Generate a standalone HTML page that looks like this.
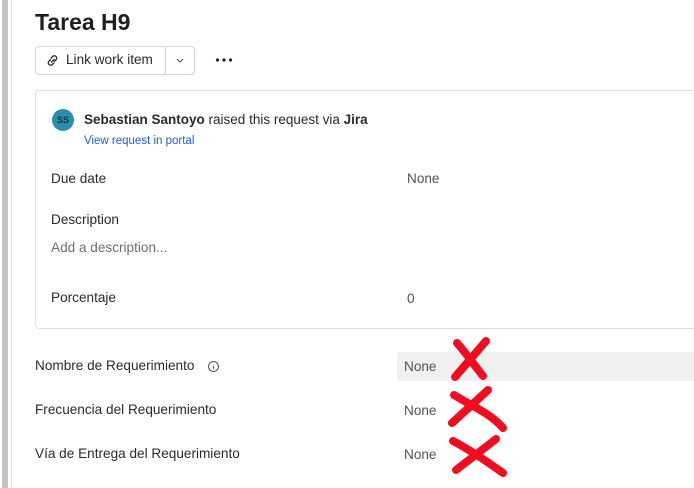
<!DOCTYPE html>
<html><head><meta charset="utf-8"><style>
*{margin:0;padding:0;box-sizing:border-box}
body{width:694px;height:488px;overflow:hidden;background:#fff;font-family:"Liberation Sans",sans-serif;color:#292a2e;position:relative}
.a{position:absolute;white-space:nowrap}
.lbl{font-size:13.6px;color:#292a2e}
.val{font-size:13.6px;color:#505258}
</style></head><body>
<div class="a" style="left:2px;top:0;width:6px;height:488px;background:#c4c4c4"></div>
<div class="a" style="left:11px;top:0;width:1px;height:488px;background:#e2e2e2"></div>

<div class="a" style="left:35px;top:9px;font-size:23px;font-weight:bold;color:#1f1f21">Tarea H9</div>

<div class="a" style="left:35px;top:46px;width:160px;height:29px;border:1px solid #d5d6d9;border-radius:4px"></div>
<div class="a" style="left:165px;top:47px;width:1px;height:27px;background:#d5d6d9"></div>
<svg class="a" style="left:45px;top:53px" width="15" height="15" viewBox="0 0 14 14" fill="none" stroke="#333" stroke-width="1.3" stroke-linecap="round"><path d="M6 8.5l2.5-2.5"/><path d="M5.2 6.2L3.6 7.8a2.2 2.2 0 003.1 3.1l1.6-1.6"/><path d="M8.8 7.8l1.6-1.6a2.2 2.2 0 00-3.1-3.1L5.7 4.7"/></svg>
<div class="a" style="left:66px;top:52px;font-size:13.6px;color:#292a2e">Link work item</div>
<svg class="a" style="left:175px;top:57px" width="10" height="7" viewBox="0 0 10 7" fill="none" stroke="#555" stroke-width="1.1"><path d="M2 2l3 3 3-3"/></svg>
<svg class="a" style="left:215px;top:58px" width="18" height="4"><circle cx="2.5" cy="2" r="1.6" fill="#222"/><circle cx="9" cy="2" r="1.6" fill="#222"/><circle cx="15.5" cy="2" r="1.6" fill="#222"/></svg>

<div class="a" style="left:35px;top:90px;width:700px;height:239px;border:1px solid #dfe0e2;border-radius:4px"></div>

<div class="a" style="left:52px;top:109px;width:22px;height:22px;border-radius:50%;background:#2b8dae;color:#16344a;font-size:9px;font-weight:bold;text-align:center;line-height:22px">SS</div>
<div class="a" style="left:84px;top:112px;font-size:13.5px"><b>Sebastian Santoyo</b> raised this request via <b>Jira</b></div>
<div class="a" style="left:84px;top:135px;font-size:11.5px;color:#1d5fd6">View request in portal</div>

<div class="a lbl" style="left:51px;top:171px">Due date</div>
<div class="a val" style="left:407px;top:171px">None</div>
<div class="a lbl" style="left:51px;top:212px">Description</div>
<div class="a val" style="left:51px;top:240px;color:#6b6e76">Add a description...</div>
<div class="a lbl" style="left:51px;top:290px">Porcentaje</div>
<div class="a val" style="left:407px;top:291px">0</div>

<div class="a" style="left:397px;top:352px;width:297px;height:29px;background:#f0f0f1;border-radius:3px 0 0 3px"></div>
<div class="a lbl" style="left:35px;top:358px">Nombre de Requerimiento</div>
<svg class="a" style="left:207px;top:360px" width="13" height="13" viewBox="0 0 13 13" fill="none" stroke="#555" stroke-width="1"><circle cx="6.5" cy="6.5" r="5"/><path d="M6.5 6v3.2M6.5 4v.4"/></svg>
<div class="a val" style="left:404px;top:359px">None</div>
<div class="a lbl" style="left:35px;top:402px">Frecuencia del Requerimiento</div>
<div class="a val" style="left:404px;top:403px">None</div>
<div class="a lbl" style="left:35px;top:446px">Vía de Entrega del Requerimiento</div>
<div class="a val" style="left:404px;top:447px">None</div>

<svg class="a" style="left:0;top:0" width="694" height="488" fill="none" stroke="#f20d1e" stroke-width="8" stroke-linecap="round">
<path d="M455 377L486 341"/><path d="M457 343C466 353 474 365 483 376"/>
<path d="M452 423L488 390"/><path d="M454 395C470 405 490 413 503 428"/>
<path d="M456 470L496 439"/><path d="M453 441C470 450 485 460 503 473"/>
</svg>
</body></html>
